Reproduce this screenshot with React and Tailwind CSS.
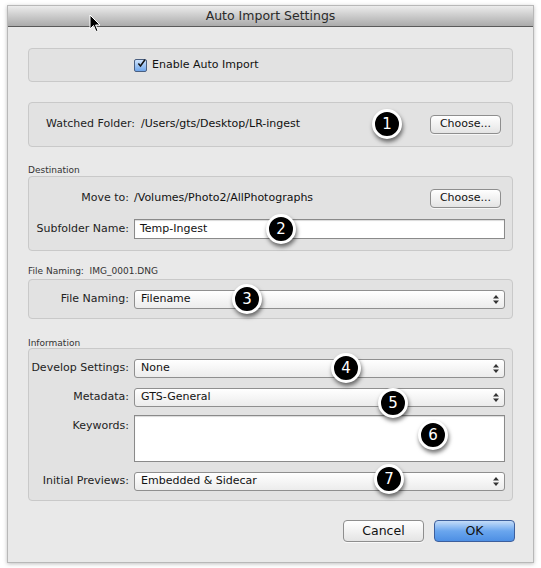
import React from 'react';

const font = { fontFamily: '"DejaVu Sans", "Liberation Sans", sans-serif' };

// numbered callout bubble
const Badge = ({ n, x, y }) => (
  <div
    className="absolute flex h-[30px] w-[30px] items-center justify-center rounded-full border-[3px] border-white bg-black text-[15px] text-white shadow-[1px_3px_4px_rgba(0,0,0,0.55)]"
    style={{ left: x - 15, top: y - 15 }}
  >
    {n}
  </div>
);

const Group = ({ className = '', children }) => (
  <div className={`mx-[20px] rounded-[4px] border border-[#c9c9c9] bg-[#e2e2e2] ${className}`}>{children}</div>
);

const Caption = ({ children, className = '' }) => (
  <div className={`ml-[20px] h-[10px] text-[9px] leading-[10px] text-[#333] ${className}`}>{children}</div>
);

const PushButton = ({ children, className = '' }) => (
  <div
    className={`flex items-center justify-center rounded-[4px] border border-[#8e8e8e] bg-gradient-to-b from-[#ffffff] to-[#e4e4e4] text-[#111] shadow-[0_1px_0_rgba(255,255,255,0.7)] ${className}`}
  >
    {children}
  </div>
);

const Popup = ({ value }) => (
  <div className="flex h-[19px] w-[371px] items-center justify-between rounded-[3px] border border-[#8f8f8f] bg-gradient-to-b from-[#ffffff] to-[#ececec] pl-[6px] pr-[5px] text-[#111]">
    <span>{value}</span>
    <svg width="6" height="9" viewBox="0 0 6 9">
      <path d="M3 0 L6 3.5 L0 3.5 Z" fill="#333" />
      <path d="M3 9 L6 5.5 L0 5.5 Z" fill="#333" />
    </svg>
  </div>
);

const Row = ({ label, children, className = '' }) => (
  <div className={`flex items-center ${className}`}>
    <div className="w-[105px] pr-[5px] text-right text-[#222]">{label}</div>
    {children}
  </div>
);

export default function App() {
  return (
    <div className="relative h-[568px] w-[541px] bg-white text-[11px]" style={font}>
      <div className="absolute left-[7px] top-[5px] h-[558px] w-[527px] border border-[#b8b8b8] bg-[#e9e9e9] shadow-[0_1px_4px_rgba(0,0,0,0.25)]">
        {/* title bar */}
        <div className="flex h-[21px] items-center justify-center border-b border-[#5a5a5a] bg-gradient-to-b from-[#ececec] to-[#ababab] text-[12.5px] text-[#2a2a2a]">
          Auto Import Settings
        </div>

        <Group className="mt-[21px] flex h-[34px] items-center pl-[105px]">
          <div className="mr-[5px] flex h-[13px] w-[13px] items-center justify-center rounded-[2px] border border-[#4a5f80] bg-gradient-to-b from-[#cfe3fb] to-[#6fa6ea]">
            <svg width="13" height="13" viewBox="0 0 13 13" className="-mt-[3px] ml-[2px]">
              <path d="M2 6.5 L5 10 L11.5 1" stroke="#111" strokeWidth="2.2" fill="none" />
            </svg>
          </div>
          <span className="text-[#111]">Enable Auto Import</span>
        </Group>

        <Group className="mt-[20px] flex h-[45px] items-center pl-[17px] pr-[11px]">
          <span className="text-[#222]">Watched Folder:</span>
          <span className="ml-[6px] flex-1 text-[#111]">/Users/gts/Desktop/LR-ingest</span>
          <PushButton className="h-[19px] w-[71px]">Choose...</PushButton>
        </Group>

        <Caption className="mt-[18px]">Destination</Caption>
        <Group className="mt-[1px] h-[75px] pt-[12px]">
          <Row label="Move to:">
            <span className="flex-1 text-[#111]">/Volumes/Photo2/AllPhotographs</span>
            <PushButton className="mr-[11px] h-[19px] w-[71px]">Choose...</PushButton>
          </Row>
          <Row label="Subfolder Name:" className="mt-[11px]">
            <div className="flex h-[20px] w-[371px] items-center border border-[#8a8a8a] bg-white pl-[5px] text-[#111] shadow-[inset_0_1px_1px_rgba(0,0,0,0.15)]">
              Temp-Ingest
            </div>
          </Row>
        </Group>

        <Caption className="mt-[15px]">File Naming:&nbsp; IMG_0001.DNG</Caption>
        <Group className="mt-[3px] flex h-[40px] items-center">
          <Row label="File Naming:">
            <Popup value="Filename" />
          </Row>
        </Group>

        <Caption className="mt-[19px]">Information</Caption>
        <Group className="mt-0 h-[153px] pt-[10px]">
          <Row label="Develop Settings:">
            <Popup value="None" />
          </Row>
          <Row label="Metadata:" className="mt-[10px]">
            <Popup value="GTS-General" />
          </Row>
          <div className="mt-[8px] flex items-start">
            <div className="w-[105px] pr-[5px] pt-[3px] text-right text-[#222]">Keywords:</div>
            <div className="h-[47px] w-[371px] border border-[#8a8a8a] bg-white shadow-[inset_0_1px_1px_rgba(0,0,0,0.15)]" />
          </div>
          <Row label="Initial Previews:" className="mt-[10px]">
            <Popup value="Embedded &amp; Sidecar" />
          </Row>
        </Group>

        <div className="mr-[18px] mt-[19px] flex justify-end gap-[10px]">
          <PushButton className="h-[22px] w-[81px] text-[12.5px]">Cancel</PushButton>
          <div className="flex h-[22px] w-[81px] items-center justify-center rounded-[4px] border border-[#3d5f9c] bg-gradient-to-b from-[#c4dcf8] via-[#6aa6ee] to-[#4d8fe4] text-[12.5px] text-[#111]">
            OK
          </div>
        </div>
      </div>

      {/* pointer */}
      <svg className="absolute left-[89px] top-[14px]" width="12" height="19" viewBox="0 0 12 19">
        <path d="M1 1 L1 15 L4.5 11.5 L7 17.5 L9 16.7 L6.6 11 L11 11 Z" fill="#000" stroke="#fff" strokeWidth="1" />
      </svg>

      <Badge n="1" x={387} y={124} />
      <Badge n="2" x={281} y={229} />
      <Badge n="3" x={247} y={299} />
      <Badge n="4" x={346} y={368} />
      <Badge n="5" x={393} y={403} />
      <Badge n="6" x={433} y={435} />
      <Badge n="7" x={389} y={479} />
    </div>
  );
}
